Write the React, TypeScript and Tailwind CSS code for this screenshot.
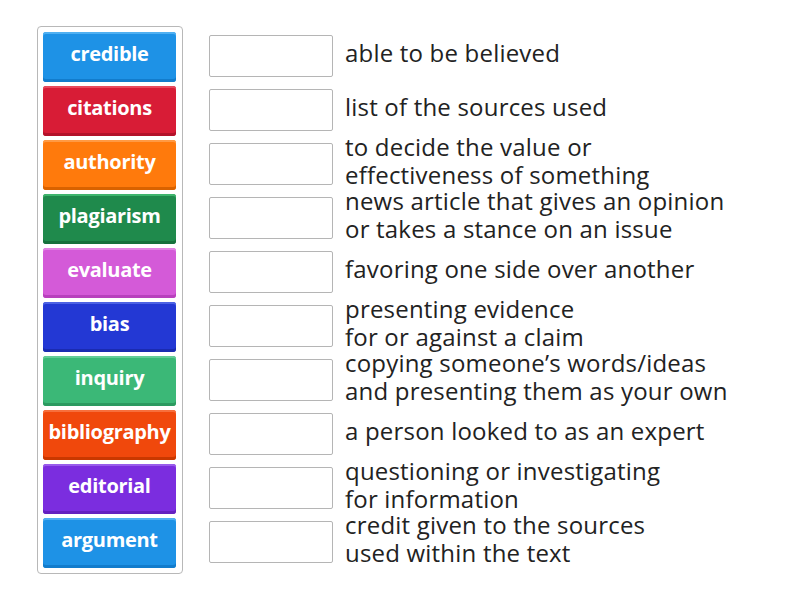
import React from "react";

const tiles: { label: string; cls: string }[] = [
  { label: "credible", cls: "bg-[#1e92e6] shadow-[inset_0_2px_0_#4fb0f2,inset_0_-3px_0_#127ccc]" },
  { label: "citations", cls: "bg-[#d81c36] shadow-[inset_0_2px_0_#e8495c,inset_0_-3px_0_#b3122a]" },
  { label: "authority", cls: "bg-[#ff7a0c] shadow-[inset_0_2px_0_#ff9a44,inset_0_-3px_0_#d96200]" },
  { label: "plagiarism", cls: "bg-[#1f8a4c] shadow-[inset_0_2px_0_#3fb56c,inset_0_-3px_0_#16703c]" },
  { label: "evaluate", cls: "bg-[#d45ad8] shadow-[inset_0_2px_0_#e283e5,inset_0_-3px_0_#b840bd]" },
  { label: "bias", cls: "bg-[#2338d4] shadow-[inset_0_2px_0_#4c62e4,inset_0_-3px_0_#1a2bb0]" },
  { label: "inquiry", cls: "bg-[#3bb877] shadow-[inset_0_2px_0_#63cc96,inset_0_-3px_0_#2c9a60]" },
  { label: "bibliography", cls: "bg-[#f0480c] shadow-[inset_0_2px_0_#f76f3c,inset_0_-3px_0_#c93800]" },
  { label: "editorial", cls: "bg-[#7b2ddf] shadow-[inset_0_2px_0_#9a5ceb,inset_0_-3px_0_#6420c0]" },
  { label: "argument", cls: "bg-[#1e92e6] shadow-[inset_0_2px_0_#4fb0f2,inset_0_-3px_0_#127ccc]" },
];

const defs: string[][] = [
  ["able to be believed"],
  ["list of the sources used"],
  ["to decide the value or", "effectiveness of something"],
  ["news article that gives an opinion", "or takes a stance on an issue"],
  ["favoring one side over another"],
  ["presenting evidence", "for or against a claim"],
  ["copying someone\u2019s words/ideas", "and presenting them as your own"],
  ["a person looked to as an expert"],
  ["questioning or investigating", "for information"],
  ["credit given to the sources", "used within the text"],
];

export default function App() {
  return (
    <div
      className="w-[800px] h-[600px] bg-white flex items-start pl-[37px] pt-[26px]"
      style={{ fontFamily: '"Open Sans", "Noto Sans", sans-serif' }}
    >
      <div className="flex flex-col gap-[4px] border border-[#b8b8b8] rounded-[4px] pt-[5px] pb-[5px] pl-[5px] pr-[6px]">
        {tiles.map((t) => (
          <div
            key={t.label}
            className={`w-[133px] h-[50px] rounded-[3px] flex items-center justify-center text-white font-bold text-[20px] leading-none pb-[6px] tracking-[-0.3px] ${t.cls}`}
          >
            {t.label}
          </div>
        ))}
      </div>
      <div className="flex flex-col ml-[26px] mt-[3px]">
        {defs.map((lines, i) => (
          <div key={i} className="h-[54px] flex items-center gap-[12px]">
            <div className="w-[124px] h-[42px] border border-[#b5b5b5] rounded-[2px] bg-white shrink-0" />
            <div className="text-[24px] leading-[28px] tracking-[0.2px] text-[#222222] pb-[6px]">
              {lines.map((l, j) => (
                <div key={j} className="whitespace-nowrap">{l}</div>
              ))}
            </div>
          </div>
        ))}
      </div>
    </div>
  );
}
